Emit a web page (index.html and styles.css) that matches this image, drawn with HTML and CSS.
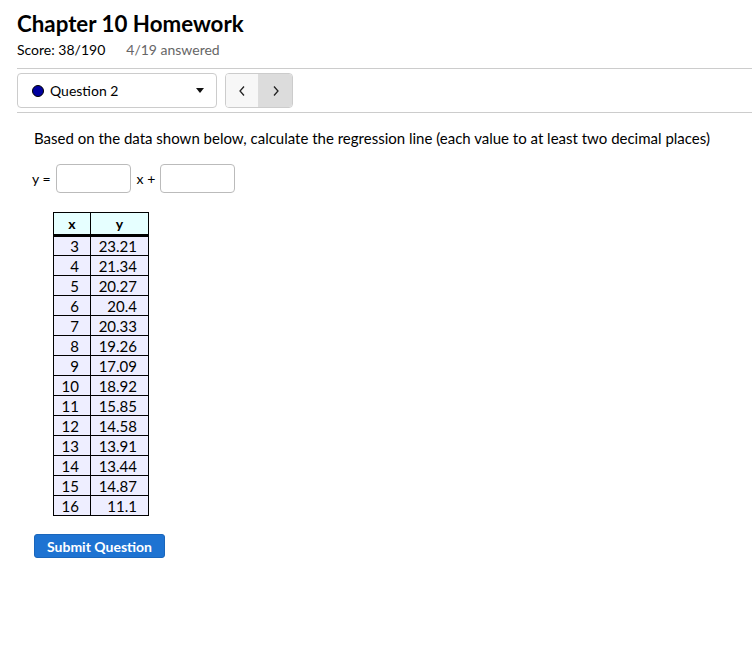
FILE: index.html
```html
<!DOCTYPE html>
<html>
<head>
<meta charset="utf-8">
<link rel="stylesheet" href="styles.css">
</head>
<body>
<div class="page">
  <h1 class="title">Chapter 10 Homework</h1>
  <div class="score"><span>Score: 38/190</span><span class="answered">4/19 answered</span></div>
  <div class="navbar">
    <div class="select">
      <span class="dot"></span>
      <span class="qlabel">Question 2</span>
      <span class="caret"></span>
    </div>
    <div class="pager">
      <button class="pbtn prev">
        <svg width="8" height="12" viewBox="0 0 8 12"><path d="M6 1.5 L2 6 L6 10.5" fill="none" stroke="#222" stroke-width="1.3"/></svg>
      </button>
      <button class="pbtn next">
        <svg width="8" height="12" viewBox="0 0 8 12"><path d="M2 1.5 L6 6 L2 10.5" fill="none" stroke="#222" stroke-width="1.3"/></svg>
      </button>
    </div>
  </div>
  <div class="question">
    <p class="prompt">Based on the data shown below, calculate the regression line (each value to at least two decimal places)</p>
    <div class="eqn">
      <span>y =</span><input class="ans" type="text"><span class="xplus">x +</span><input class="ans" type="text">
    </div>
    <table class="data">
      <thead><tr><th>x</th><th>y</th></tr></thead>
      <tbody>
        <tr><td>3</td><td>23.21</td></tr>
        <tr><td>4</td><td>21.34</td></tr>
        <tr><td>5</td><td>20.27</td></tr>
        <tr><td>6</td><td>20.4</td></tr>
        <tr><td>7</td><td>20.33</td></tr>
        <tr><td>8</td><td>19.26</td></tr>
        <tr><td>9</td><td>17.09</td></tr>
        <tr><td>10</td><td>18.92</td></tr>
        <tr><td>11</td><td>15.85</td></tr>
        <tr><td>12</td><td>14.58</td></tr>
        <tr><td>13</td><td>13.91</td></tr>
        <tr><td>14</td><td>13.44</td></tr>
        <tr><td>15</td><td>14.87</td></tr>
        <tr><td>16</td><td>11.1</td></tr>
      </tbody>
    </table>
    <button class="submit">Submit Question</button>
  </div>
</div>
</body>
</html>
```

FILE: styles.css
```css
* { box-sizing: border-box; }
body {
  margin: 0;
  background: #fff;
  font-family: Lato, "Liberation Sans", sans-serif;
  color: #000;
}
.page {
  padding: 10px 0 0 17px;
}
.title {
  margin: 0;
  font-size: 22.3px;
  font-weight: bold;
  line-height: 28px;
}
.score {
  display: flex;
  gap: 21px;
  font-size: 14px;
  line-height: 20px;
  margin-top: 2px;
}
.answered { color: #666; }
.navbar {
  margin-top: 8px;
  border-top: 1px solid #ccc;
  border-bottom: 1px solid #ccc;
  padding: 4px 0 4px 0;
  display: flex;
  gap: 8px;
}
.select {
  width: 200px;
  height: 35px;
  border: 1px solid #ccc;
  border-radius: 4px;
  display: flex;
  align-items: center;
  padding: 0 10px 0 14px;
  font-size: 14px;
}
.dot {
  width: 12px;
  height: 12px;
  border-radius: 50%;
  background: #0000a0;
  border: 1px solid #000;
  margin-right: 6px;
}
.qlabel { flex: 1; }
.caret {
  width: 0; height: 0;
  border-left: 4px solid transparent;
  border-right: 4px solid transparent;
  border-top: 5px solid #111;
  margin-right: 2px;
}
.pager {
  display: flex;
  height: 35px;
  border: 1px solid #ccc;
  border-radius: 4px;
  overflow: hidden;
}
.pbtn {
  width: 33px;
  border: none;
  padding: 0;
  display: flex;
  align-items: center;
  justify-content: center;
}
.prev { background: #f7f7f7; border-right: 1px solid #ddd; }
.next { background: #dcdcdc; }
.question {
  padding-left: 17px;
}
.prompt {
  margin: 15px 0 0 0;
  font-size: 15px;
  line-height: 20px;
}
.eqn {
  display: flex;
  align-items: center;
  gap: 5px;
  margin-top: 16px;
  font-size: 14px;
  margin-left: -2px;
}
.xplus { margin-left: 1px; }
.ans {
  width: 75px;
  height: 29px;
  border: 1px solid #bbb;
  border-radius: 4px;
  margin: 0;
}
.data {
  margin: 19px 0 0 19px;
  border-collapse: collapse;
  font-size: 15px;
}
.data th, .data td {
  border: 1px solid #000;
  height: 20px;
  line-height: 18px;
}
.data th {
  height: 23px;
  font-size: 14px;
  background: #e6ffff;
  text-align: center;
  font-weight: bold;
  border-bottom: 3px solid #000;
  padding: 0;
}
.data td {
  background: #eeeeff;
  text-align: right;
}
.data td:first-child { width: 37px; padding: 0 11px 0 0; }
.data td:last-child { width: 58px; padding: 0 11px 0 0; }
.submit {
  display: block;
  margin-top: 18px;
  background: #1e73d2;
  color: #fff;
  border: 1px solid #1a66bb;
  border-radius: 3px;
  font-family: inherit;
  font-size: 14px;
  font-weight: bold;
  height: 24px;
  padding: 0 12px;
}
```
